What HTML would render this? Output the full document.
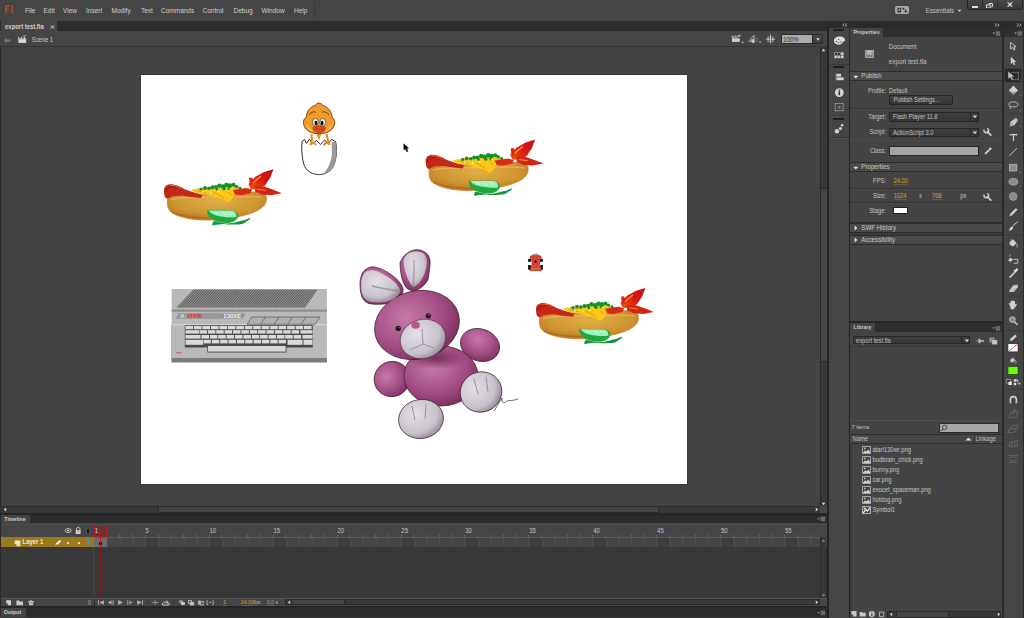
<!DOCTYPE html>
<html><head><meta charset="utf-8">
<style>
html,body{margin:0;padding:0;}
body{width:1024px;height:618px;overflow:hidden;position:relative;background:#2a2a2a;font-family:"Liberation Sans",sans-serif;color:#cfcfcf;}
.a{position:absolute;}
.t{position:absolute;white-space:nowrap;line-height:1;}
</style></head><body>
<!-- menu bar -->
<div class="a" style="left:0;top:0;width:1024px;height:21px;background:#454545"></div>
<svg class="a" style="left:4px;top:4px" width="11" height="11" viewBox="0 0 11 11"><path d="M1.8 1.9H5.6M1.8 1.9V9.6M1.8 5.6H5" stroke="#b04a32" stroke-width="1.7" fill="none"/><path d="M8.2 1.4V8.4Q8.2 9.4 9.4 9.8" stroke="#b04a32" stroke-width="1.5" fill="none"/></svg>
<div id="menu" style="font-size:6.5px;color:#cfcfcf">
<span class="t" style="left:25px;top:7.6px">File</span>
<span class="t" style="left:43.5px;top:7.6px">Edit</span>
<span class="t" style="left:63px;top:7.6px">View</span>
<span class="t" style="left:86px;top:7.6px">Insert</span>
<span class="t" style="left:111.5px;top:7.6px">Modify</span>
<span class="t" style="left:141px;top:7.6px">Text</span>
<span class="t" style="left:161px;top:7.6px">Commands</span>
<span class="t" style="left:202.5px;top:7.6px">Control</span>
<span class="t" style="left:233.5px;top:7.6px">Debug</span>
<span class="t" style="left:261.5px;top:7.6px">Window</span>
<span class="t" style="left:294px;top:7.6px">Help</span>
</div>
<div class="a" style="left:314px;top:3px;width:1px;height:14px;background:#3a3a3a"></div>
<!-- top right -->
<div class="a" style="left:895px;top:6px;width:14px;height:8px;background:#a9a9a9;border-radius:2px"></div>
<svg class="a" style="left:895px;top:6px" width="14" height="8" viewBox="0 0 14 8"><path d="M3 2.2h2.6v3.4H3z" fill="none" stroke="#333" stroke-width="1.1"/><path d="M4.3 5.6v1.3" stroke="#333" stroke-width="1"/><circle cx="8.5" cy="2.8" r="1" fill="#333"/><path d="M9.3 5.3h3M10.8 3.8v3" stroke="#333" stroke-width="1.1"/></svg>
<div class="a" style="left:919.5px;top:3px;width:0.8px;height:14px;background:#414141"></div>
<span class="t" style="left:925.5px;top:6.9px;font-size:6.3px;color:#c4c4c4;transform:scaleY(1.15);transform-origin:0 0">Essentials</span>
<svg class="a" style="left:957px;top:9px" width="5" height="4"><path d="M0.5 0.8h4L2.5 3z" fill="#ccc"/></svg>
<div class="a" style="left:967.3px;top:-2px;width:55.4px;height:11.6px;background:linear-gradient(#4a4a4a,#3a3a3a);border:1px solid #262626;border-radius:0 0 3px 3px;box-sizing:border-box"></div>
<div class="a" style="left:982px;top:0;width:1px;height:9px;background:#2b2b2b"></div>
<div class="a" style="left:997px;top:0;width:1px;height:9px;background:#2b2b2b"></div>
<div class="a" style="left:972px;top:5.8px;width:6px;height:2px;background:#e0e0e0"></div>
<svg class="a" style="left:986.3px;top:2.6px" width="7" height="5.5" viewBox="0 0 7 5.5"><path d="M2.8 0.6h3.6v3.2h-1" fill="none" stroke="#e6e6e6" stroke-width="1"/><path d="M0.6 1.8h3.6v3.2H0.6z" fill="none" stroke="#e6e6e6" stroke-width="1"/></svg>
<svg class="a" style="left:1006.6px;top:2.4px" width="6" height="5" viewBox="0 0 6 5"><path d="M0.6 0.4L5.2 4.6M5.2 0.4L0.6 4.6" stroke="#e8e8e8" stroke-width="1.2"/></svg>
<!-- doc tab bar -->
<div class="a" style="left:0;top:21px;width:827px;height:10px;background:#2c2c2c"></div>
<div class="a" style="left:1px;top:21px;width:56px;height:10px;background:#454545"></div>
<span class="t" style="left:5.1px;top:23.6px;font-size:5.9px;font-weight:bold;color:#d2d2d2;transform:scaleY(1.2);transform-origin:0 0">export test.fla</span>
<svg class="a" style="left:50px;top:24.5px" width="5" height="4" viewBox="0 0 5 4"><path d="M0.6 0.4L4.4 3.6M4.4 0.4L0.6 3.6" stroke="#cfcfcf" stroke-width="0.9"/></svg>
<!-- scene bar -->
<div class="a" style="left:0;top:31px;width:827px;height:14.5px;background:#454545"></div>
<div class="a" style="left:0;top:45.5px;width:827px;height:1.5px;background:#333"></div>
<svg class="a" style="left:3px;top:36.6px" width="8" height="7" viewBox="0 0 8 7"><path d="M0.8 3.5L3.6 0.8V2.5H7.2V4.5H3.6V6.2z" fill="#7a7a7a"/></svg>
<svg class="a" style="left:17px;top:35px" width="10" height="9" viewBox="0 0 10 9"><path d="M1.4 4.2h7.8v3.7H1.4z" fill="#d8d8d8"/><path d="M1 4.4L1.2 1.6L3 4.2L4.4 1.4L5.8 4.2L7.4 1.4L9.2 4.2V4.6H1z" fill="#cfcfcf"/><path d="M5.6 1.4L9 0.4" stroke="#cfcfcf" stroke-width="0.7"/></svg>
<span class="t" style="left:31.8px;top:37.4px;font-size:5.8px;color:#c8c8c8;transform:scaleY(1.2);transform-origin:0 0">Scene 1</span>
<!-- scene right icons -->
<svg class="a" style="left:731px;top:34px" width="13" height="10" viewBox="0 0 13 10"><path d="M1 4.3h7.8v3.6H1z" fill="#cfcfcf"/><path d="M1 4.3L1.6 1.8L2.8 3.8M3.8 4L4.6 1.6L5.8 3.6M6.6 3.6L7.4 1.2L8.6 3M8.6 2.6L9.2 0.6" stroke="#cdcdcd" stroke-width="0.9" fill="none"/><path d="M10.3 7.8h2.6L11.6 9.2z" fill="#d0d0d0"/></svg>
<svg class="a" style="left:748px;top:34px" width="14" height="10" viewBox="0 0 14 10"><path d="M1 7.2L6 1.2V7.2z" fill="none" stroke="#bdbdbd" stroke-width="0.9"/><circle cx="5.2" cy="7" r="1.9" fill="#c8c8c8"/><path d="M6.6 4.6h2.4v2.6H6.6z" fill="#222" stroke="#aaa" stroke-width="0.6"/><path d="M10.8 7.6h2.6L12.1 9z" fill="#d0d0d0"/></svg>
<svg class="a" style="left:765px;top:34px" width="11" height="10" viewBox="0 0 11 10"><path d="M1 5.2H10M5.5 0.6V9.4M3.2 2.8V7.6M7.8 2.8V7.6" stroke="#d0d0d0" stroke-width="0.9" fill="none"/><path d="M2.2 7.6H8.8M2.2 2.8H8.8" stroke="#d0d0d0" stroke-width="0.5" fill="none" opacity="0.6"/></svg>
<div class="a" style="left:781px;top:34.3px;width:41.7px;height:9.4px;background:#2a2a2a;border-radius:1.5px"></div>
<div class="a" style="left:781.8px;top:35.3px;width:30.2px;height:7.6px;background:#ababab"></div>
<div class="a" style="left:812.8px;top:35.3px;width:9.2px;height:7.6px;background:linear-gradient(#474747,#393939)"></div>
<svg class="a" style="left:815.5px;top:37.6px" width="4" height="3"><path d="M0.2 0.3h3.6L2 2.8z" fill="#e0e0e0"/></svg>
<span class="t" style="left:783.3px;top:36.1px;font-size:6px;color:#2a3038;transform:scaleY(1.1);transform-origin:0 0">100%</span>
<!-- pasteboard -->
<div class="a" style="left:1px;top:47px;width:819px;height:459px;background:#434343"></div>
<!-- stage -->
<div class="a" style="left:141px;top:75px;width:546px;height:409px;background:#fff;box-shadow:0 0 0 1px #3a3a3a"></div>
<!-- stage art -->
<svg class="a" style="left:0;top:0" width="1024" height="618" viewBox="0 0 1024 618">
<defs>
<radialGradient id="bunG" cx="0.5" cy="0.35" r="0.7"><stop offset="0" stop-color="#e0ae48"/><stop offset="0.6" stop-color="#d09632"/><stop offset="1" stop-color="#b2701c"/></radialGradient>
<linearGradient id="tomG" x1="0" y1="1" x2="1" y2="0"><stop offset="0" stop-color="#f06010"/><stop offset="0.5" stop-color="#d81a10"/><stop offset="1" stop-color="#c01010"/></linearGradient>
<g id="hotdog">
<path d="M9.5 37C8 31.5 13 31 24 32L70 32.5L96 30C105 29 110 32 108 40C105 50 84 55 62 57.5C40 59.5 18 56 11.5 48.5C9 45 9.5 41 9.5 37Z" fill="url(#bunG)" stroke="#c88a38" stroke-width="0.9"/>
<path d="M13 38C22 34 50 35.5 70 35.5C88 35 100 33 105 36" stroke="#ecc070" stroke-width="1.4" fill="none" opacity="0.6"/>
<path d="M14 50C24 55 44 57 62 55" stroke="#a8621a" stroke-width="1.6" fill="none" opacity="0.6"/>
<path d="M6 29.5C5.5 24 9.5 21.8 15 22.5C20 23.2 23 25 26 27L36 30.5L44.5 33L43 36L34 35.2L24 33.5L14 34.2C11 36.4 8 37.5 6.5 34Z" fill="#c42818"/>
<path d="M7.6 30C8.2 26 12 24.4 17 25" stroke="#7a1008" stroke-width="1.2" fill="none" opacity="0.6"/>
<path d="M12 23.5C16 23 20 24 23 26" stroke="#f07040" stroke-width="1" fill="none"/>
<path d="M33 28C40 26 50 25 60 24.5L79 24L84 27.5L80 31.5L76 33.5L73 38.5L69 40.5L65 37L56 35L48 32.5L38 31Z" fill="#fac814"/>
<path d="M40 29L48 31M55 30L62 33.5L66 36M70 30L74 33" stroke="#e8900e" stroke-width="0.9" fill="none"/>
<g fill="#14902a"><circle cx="43" cy="27" r="1.6"/><circle cx="47" cy="26" r="1.9"/><circle cx="51" cy="26.3" r="1.8"/><circle cx="54.5" cy="25.2" r="2"/><circle cx="58" cy="25" r="2"/><circle cx="61.5" cy="23.6" r="2.2"/><circle cx="65" cy="24.4" r="2.2"/><circle cx="68.5" cy="23" r="2.3"/><circle cx="72" cy="23.5" r="2.2"/><circle cx="75.5" cy="22.8" r="2"/><circle cx="78.5" cy="24.4" r="1.7"/><circle cx="82" cy="26" r="1.5"/><circle cx="66" cy="26.6" r="1.8"/><circle cx="71" cy="26.4" r="1.6"/><circle cx="59" cy="27.4" r="1.3"/></g>
<g fill="#c8f4e8"><circle cx="45" cy="30" r="0.9"/><circle cx="53" cy="30.5" r="0.8"/><circle cx="60" cy="29" r="0.9"/><circle cx="72" cy="27" r="0.8"/></g>
<path d="M75 28L88 26L94 27.5L93 31L84 33.2L77 32.5Z" fill="#d82a16"/>
<path d="M90.5 22L97 15L106 10L115.5 7.2L112 16L107 23.5L99 27.5L92.5 27Z" fill="url(#tomG)"/>
<path d="M91 16L94 15.5L96 20L92 24Z" fill="#e02414"/>
<path d="M97.5 24L106 24.5L116 28L123.8 31.2L113 33.2L104 32.5L97 29.5Z" fill="#d42414"/>
<path d="M95 21L103 14" stroke="#f89030" stroke-width="1.4" fill="none"/>
<path d="M99 27L108 28.5" stroke="#f88030" stroke-width="1.1" fill="none"/>
<path d="M49 48.3L75 48.4C78 49.5 80.5 51.5 80.5 54C79 58 76 60.5 70 61C63 61.2 57 59.5 53 56.5C50.5 54.5 49 51.5 49 48.3Z" fill="#1fa83e"/>
<path d="M56 59C60 60 64 61 68 61.5C74 61.5 80 60 84 58.5L86.5 58.3L88.5 57.2C90 57 91.2 56.4 92.4 55.8C92 57.6 90.6 58.6 88.8 59.2C86.5 61.5 83 62.6 79 62.4C75 62.8 70 62.6 66 62C62 62.2 58 62.8 54.3 63.4C54.2 61.6 54.8 60 56 59Z" fill="#15963a"/>
<path d="M50.8 48.6L75 48.7C77.5 50 78.6 52 78.2 55C72 55.8 64 55 57.5 53.2C54 52 51.5 50.5 50.8 48.6Z" fill="#9ef2bc"/>
<path d="M56 50L60 51.5M64 50.5L68 52.5M70 50L74 52" stroke="#d8fce8" stroke-width="0.8"/>

</g>
</defs>
<use href="#hotdog" transform="translate(158 162)"/>
<use href="#hotdog" transform="translate(419.7 132.4)"/>
<use href="#hotdog" transform="translate(530 280.7)"/>
<g transform="translate(522 248)">
<rect x="6.1" y="10.9" width="3" height="2.9" fill="#111"/><rect x="18" y="10.9" width="2.9" height="2.9" fill="#111"/>
<rect x="6.1" y="17" width="2.8" height="4.7" fill="#111"/><rect x="18.3" y="17" width="2.6" height="4.7" fill="#111"/>
<path d="M11.3 6.4h4.6v1.4h2.4l0.8 1v2.6h-1.6v6.4l1.4 1.2v1.2h0.4v2.6h-11.2v-2.6h0.4v-1.2l1.4-1.2v-6.4h-1.6v-2.6l0.8-1h2.4z" fill="#e04a34" stroke="#4a1208" stroke-width="0.5"/>
<path d="M12.2 8v12M15 8v12" stroke="#b82a1a" stroke-width="0.5"/>
<ellipse cx="13.6" cy="13.6" rx="1" ry="1.3" fill="#111"/>
<rect x="11.6" y="5.8" width="4" height="0.9" fill="#bbb"/>
<rect x="9" y="20.2" width="9" height="1.2" fill="#f07050"/>
</g>
<g transform="translate(165 282)">
<path d="M6.6 7h155.3v72.5H6.6z" fill="#b9b9b9"/>
<path d="M6.6 76h155.3v4.5H6.6z" fill="#7c7c7c"/>
<path d="M6.6 42h155.3v1.2H6.6z" fill="#d4d4d4"/>
<path d="M6.6 27.5h155.3v2.2H6.6z" fill="#8e8e8e"/>
<path d="M11.2 25.7L28.4 7.5H152.5L140 25.7z" fill="#a8a8a8"/>
<clipPath id="ventclip"><path d="M11.2 25.7L28.4 7.5H152.5L140 25.7z"/></clipPath>
<g clip-path="url(#ventclip)"><path d="M11.00 25.8L28.40 7.4" stroke="#5c5c5c" stroke-width="1.15"/><path d="M13.42 25.8L30.82 7.4" stroke="#5c5c5c" stroke-width="1.15"/><path d="M15.84 25.8L33.24 7.4" stroke="#5c5c5c" stroke-width="1.15"/><path d="M18.26 25.8L35.66 7.4" stroke="#5c5c5c" stroke-width="1.15"/><path d="M20.68 25.8L38.08 7.4" stroke="#5c5c5c" stroke-width="1.15"/><path d="M23.10 25.8L40.50 7.4" stroke="#5c5c5c" stroke-width="1.15"/><path d="M25.52 25.8L42.92 7.4" stroke="#5c5c5c" stroke-width="1.15"/><path d="M27.94 25.8L45.34 7.4" stroke="#5c5c5c" stroke-width="1.15"/><path d="M30.36 25.8L47.76 7.4" stroke="#5c5c5c" stroke-width="1.15"/><path d="M32.78 25.8L50.18 7.4" stroke="#5c5c5c" stroke-width="1.15"/><path d="M35.20 25.8L52.60 7.4" stroke="#5c5c5c" stroke-width="1.15"/><path d="M37.62 25.8L55.02 7.4" stroke="#5c5c5c" stroke-width="1.15"/><path d="M40.04 25.8L57.44 7.4" stroke="#5c5c5c" stroke-width="1.15"/><path d="M42.46 25.8L59.86 7.4" stroke="#5c5c5c" stroke-width="1.15"/><path d="M44.88 25.8L62.28 7.4" stroke="#5c5c5c" stroke-width="1.15"/><path d="M47.30 25.8L64.70 7.4" stroke="#5c5c5c" stroke-width="1.15"/><path d="M49.72 25.8L67.12 7.4" stroke="#5c5c5c" stroke-width="1.15"/><path d="M52.14 25.8L69.54 7.4" stroke="#5c5c5c" stroke-width="1.15"/><path d="M54.56 25.8L71.96 7.4" stroke="#5c5c5c" stroke-width="1.15"/><path d="M56.98 25.8L74.38 7.4" stroke="#5c5c5c" stroke-width="1.15"/><path d="M59.40 25.8L76.80 7.4" stroke="#5c5c5c" stroke-width="1.15"/><path d="M61.82 25.8L79.22 7.4" stroke="#5c5c5c" stroke-width="1.15"/><path d="M64.24 25.8L81.64 7.4" stroke="#5c5c5c" stroke-width="1.15"/><path d="M66.66 25.8L84.06 7.4" stroke="#5c5c5c" stroke-width="1.15"/><path d="M69.08 25.8L86.48 7.4" stroke="#5c5c5c" stroke-width="1.15"/><path d="M71.50 25.8L88.90 7.4" stroke="#5c5c5c" stroke-width="1.15"/><path d="M73.92 25.8L91.32 7.4" stroke="#5c5c5c" stroke-width="1.15"/><path d="M76.34 25.8L93.74 7.4" stroke="#5c5c5c" stroke-width="1.15"/><path d="M78.76 25.8L96.16 7.4" stroke="#5c5c5c" stroke-width="1.15"/><path d="M81.18 25.8L98.58 7.4" stroke="#5c5c5c" stroke-width="1.15"/><path d="M83.60 25.8L101.00 7.4" stroke="#5c5c5c" stroke-width="1.15"/><path d="M86.02 25.8L103.42 7.4" stroke="#5c5c5c" stroke-width="1.15"/><path d="M88.44 25.8L105.84 7.4" stroke="#5c5c5c" stroke-width="1.15"/><path d="M90.86 25.8L108.26 7.4" stroke="#5c5c5c" stroke-width="1.15"/><path d="M93.28 25.8L110.68 7.4" stroke="#5c5c5c" stroke-width="1.15"/><path d="M95.70 25.8L113.10 7.4" stroke="#5c5c5c" stroke-width="1.15"/><path d="M98.12 25.8L115.52 7.4" stroke="#5c5c5c" stroke-width="1.15"/><path d="M100.54 25.8L117.94 7.4" stroke="#5c5c5c" stroke-width="1.15"/><path d="M102.96 25.8L120.36 7.4" stroke="#5c5c5c" stroke-width="1.15"/><path d="M105.38 25.8L122.78 7.4" stroke="#5c5c5c" stroke-width="1.15"/><path d="M107.80 25.8L125.20 7.4" stroke="#5c5c5c" stroke-width="1.15"/><path d="M110.22 25.8L127.62 7.4" stroke="#5c5c5c" stroke-width="1.15"/><path d="M112.64 25.8L130.04 7.4" stroke="#5c5c5c" stroke-width="1.15"/><path d="M115.06 25.8L132.46 7.4" stroke="#5c5c5c" stroke-width="1.15"/><path d="M117.48 25.8L134.88 7.4" stroke="#5c5c5c" stroke-width="1.15"/><path d="M119.90 25.8L137.30 7.4" stroke="#5c5c5c" stroke-width="1.15"/><path d="M122.32 25.8L139.72 7.4" stroke="#5c5c5c" stroke-width="1.15"/><path d="M124.74 25.8L142.14 7.4" stroke="#5c5c5c" stroke-width="1.15"/><path d="M127.16 25.8L144.56 7.4" stroke="#5c5c5c" stroke-width="1.15"/><path d="M129.58 25.8L146.98 7.4" stroke="#5c5c5c" stroke-width="1.15"/><path d="M132.00 25.8L149.40 7.4" stroke="#5c5c5c" stroke-width="1.15"/><path d="M134.42 25.8L151.82 7.4" stroke="#5c5c5c" stroke-width="1.15"/><path d="M136.84 25.8L154.24 7.4" stroke="#5c5c5c" stroke-width="1.15"/><path d="M139.26 25.8L156.66 7.4" stroke="#5c5c5c" stroke-width="1.15"/><path d="M141.68 25.8L159.08 7.4" stroke="#5c5c5c" stroke-width="1.15"/><path d="M144.10 25.8L161.50 7.4" stroke="#5c5c5c" stroke-width="1.15"/><path d="M146.52 25.8L163.92 7.4" stroke="#5c5c5c" stroke-width="1.15"/><path d="M148.94 25.8L166.34 7.4" stroke="#5c5c5c" stroke-width="1.15"/><path d="M151.36 25.8L168.76 7.4" stroke="#5c5c5c" stroke-width="1.15"/></g>
<path d="M10.8 36.5L13.5 31.5H80.5L77.5 36.5z" fill="#8e8e8e"/>
<path d="M13.5 31.5H58L56 36.5H10.8z" fill="#9a9a9a"/>
<text x="22" y="36.1" font-family="Liberation Sans" font-weight="bold" font-size="5.2" fill="#e82020" textLength="15" lengthAdjust="spacingAndGlyphs">ATARI</text>
<text x="58.3" y="36.1" font-family="Liberation Sans" font-weight="bold" font-size="5.2" fill="#f4f4f4" textLength="18" lengthAdjust="spacingAndGlyphs">130XE</text>
<path d="M15.6 36L17 32.2M17.4 36V32.2M19.2 36L17.8 32.2" stroke="#e8e8e8" stroke-width="0.6"/>
<path d="M82 42.3L87 35H155L150 42.3z" fill="#b0b0b0" stroke="#444" stroke-width="0.6"/>
<path d="M95.5 42.3L100.5 35M109 42.3L114 35M122.5 42.3L127.5 35M136 42.3L141 35" stroke="#444" stroke-width="0.6"/>
<path d="M19.8 43.2H147.8V65.5H121.5V70.5H42.3V65.5H19.8z" fill="#4a4a4a"/>
<rect x="20.5" y="44.0" width="7.6" height="3.2" fill="#dadada"/><rect x="29.0" y="44.0" width="7.6" height="3.2" fill="#dadada"/><rect x="37.4" y="44.0" width="7.6" height="3.2" fill="#dadada"/><rect x="45.9" y="44.0" width="7.6" height="3.2" fill="#dadada"/><rect x="54.4" y="44.0" width="7.6" height="3.2" fill="#dadada"/><rect x="62.8" y="44.0" width="7.6" height="3.2" fill="#dadada"/><rect x="71.3" y="44.0" width="7.6" height="3.2" fill="#dadada"/><rect x="79.8" y="44.0" width="7.6" height="3.2" fill="#dadada"/><rect x="88.2" y="44.0" width="7.6" height="3.2" fill="#dadada"/><rect x="96.7" y="44.0" width="7.6" height="3.2" fill="#dadada"/><rect x="105.2" y="44.0" width="7.6" height="3.2" fill="#dadada"/><rect x="113.6" y="44.0" width="7.6" height="3.2" fill="#dadada"/><rect x="122.1" y="44.0" width="7.6" height="3.2" fill="#dadada"/><rect x="130.6" y="44.0" width="7.6" height="3.2" fill="#dadada"/><rect x="139.0" y="44.0" width="7.6" height="3.2" fill="#dadada"/><rect x="20.5" y="48.2" width="13.5" height="3.4" fill="#dadada"/><rect x="34.5" y="48.2" width="7.5" height="3.4" fill="#dadada"/><rect x="42.9" y="48.2" width="7.5" height="3.4" fill="#dadada"/><rect x="51.2" y="48.2" width="7.5" height="3.4" fill="#dadada"/><rect x="59.6" y="48.2" width="7.5" height="3.4" fill="#dadada"/><rect x="68.0" y="48.2" width="7.5" height="3.4" fill="#dadada"/><rect x="76.4" y="48.2" width="7.5" height="3.4" fill="#dadada"/><rect x="84.8" y="48.2" width="7.5" height="3.4" fill="#dadada"/><rect x="93.1" y="48.2" width="7.5" height="3.4" fill="#dadada"/><rect x="101.5" y="48.2" width="7.5" height="3.4" fill="#dadada"/><rect x="109.9" y="48.2" width="7.5" height="3.4" fill="#dadada"/><rect x="118.2" y="48.2" width="7.5" height="3.4" fill="#dadada"/><rect x="126.6" y="48.2" width="7.5" height="3.4" fill="#dadada"/><rect x="135.5" y="48.2" width="12.0" height="3.4" fill="#dadada"/><rect x="20.5" y="53.0" width="15.0" height="3.6" fill="#dadada"/><rect x="36.5" y="53.0" width="7.5" height="3.6" fill="#dadada"/><rect x="44.9" y="53.0" width="7.5" height="3.6" fill="#dadada"/><rect x="53.2" y="53.0" width="7.5" height="3.6" fill="#dadada"/><rect x="61.6" y="53.0" width="7.5" height="3.6" fill="#dadada"/><rect x="70.0" y="53.0" width="7.5" height="3.6" fill="#dadada"/><rect x="78.4" y="53.0" width="7.5" height="3.6" fill="#dadada"/><rect x="86.8" y="53.0" width="7.5" height="3.6" fill="#dadada"/><rect x="95.1" y="53.0" width="7.5" height="3.6" fill="#dadada"/><rect x="103.5" y="53.0" width="7.5" height="3.6" fill="#dadada"/><rect x="111.9" y="53.0" width="7.5" height="3.6" fill="#dadada"/><rect x="120.2" y="53.0" width="7.5" height="3.6" fill="#dadada"/><rect x="128.6" y="53.0" width="7.5" height="3.6" fill="#dadada"/><rect x="137.5" y="53.0" width="10.0" height="3.6" fill="#dadada"/><rect x="20.5" y="57.8" width="17.5" height="5.0" fill="#dadada"/><rect x="38.5" y="57.8" width="7.4" height="3.6" fill="#dadada"/><rect x="46.9" y="57.8" width="7.4" height="3.6" fill="#dadada"/><rect x="55.2" y="57.8" width="7.4" height="3.6" fill="#dadada"/><rect x="63.5" y="57.8" width="7.4" height="3.6" fill="#dadada"/><rect x="71.9" y="57.8" width="7.4" height="3.6" fill="#dadada"/><rect x="80.2" y="57.8" width="7.4" height="3.6" fill="#dadada"/><rect x="88.6" y="57.8" width="7.4" height="3.6" fill="#dadada"/><rect x="96.9" y="57.8" width="7.4" height="3.6" fill="#dadada"/><rect x="105.3" y="57.8" width="7.4" height="3.6" fill="#dadada"/><rect x="113.6" y="57.8" width="7.4" height="3.6" fill="#dadada"/><rect x="122.5" y="57.8" width="15.0" height="5.0" fill="#dadada"/><rect x="138.5" y="57.8" width="9.0" height="5.0" fill="#dadada"/>
<rect x="43" y="64" width="77.6" height="5.6" fill="#d8d8d8"/>
<path d="M11.3 70.8h5.2" stroke="#e04040" stroke-width="0.9"/>
<path d="M6.6 42.3V79" stroke="#9a9a9a" stroke-width="0.6"/>
</g>
<g transform="translate(350 244)">
<defs>
<radialGradient id="pinkG" cx="0.4" cy="0.35" r="0.7"><stop offset="0" stop-color="#c47aa6"/><stop offset="0.55" stop-color="#a85288"/><stop offset="1" stop-color="#7a2e5a"/></radialGradient>
<radialGradient id="shadG"><stop offset="0" stop-color="#6a2048" stop-opacity="0.85"/><stop offset="1" stop-color="#6a2048" stop-opacity="0"/></radialGradient>
<radialGradient id="grayG" cx="0.4" cy="0.35" r="0.7"><stop offset="0" stop-color="#e4e0e6"/><stop offset="0.7" stop-color="#c8c2cc"/><stop offset="1" stop-color="#8c8490"/></radialGradient>
</defs>
<g stroke="#3a1a2a" stroke-width="0.7">
<path d="M10.1 37.5C11 31 13 27 15.2 25.8C18 23.5 21 22.6 24 22.9C30 24 35 26.5 38.5 28.8C44 32.5 48 36 50.1 39C52.5 42 53.6 45 53 47.7C52 51 50.5 53.5 48.7 55C44 58 39 59.5 34.1 60C28 60.5 22 60.5 18.1 59.3C15 58 12.8 55.5 11.6 52C10.2 47.5 9.8 42 10.1 37.5Z" fill="url(#pinkG)"/>
<path d="M50.1 18.6C52 14 54.5 11 57.4 9.1C61 6.5 64 5.6 67.6 5.7C72 6 75.5 8 77.8 10.6C79.6 13 80.4 16.5 80 20C79.6 26 79 31 77.8 36C75 41 71 44.5 66.2 46.2C63 47.2 60 46.5 57.4 44.8C54.5 42 52.8 38 51.6 33.1C50.6 28 49.9 23 50.1 18.6Z" fill="url(#pinkG)"/>
<ellipse cx="42" cy="135" rx="18" ry="17.5" fill="url(#pinkG)" transform="rotate(-30 42 135)"/>
<ellipse cx="130" cy="101" rx="20" ry="16" fill="url(#pinkG)" transform="rotate(20 130 101)"/>
<ellipse cx="91" cy="132" rx="37" ry="30" fill="url(#pinkG)"/>
<ellipse cx="86" cy="114" rx="30" ry="11" fill="url(#shadG)" stroke="none"/><ellipse cx="67" cy="81" rx="43" ry="34" fill="url(#pinkG)" transform="rotate(-15 67 81)"/>
</g>
<path d="M11.2 38C12 32 14 28.5 17 27C20.5 25.6 24 26 28 27.5C34 30 40 34 45 38.5C48.5 42 50.5 45.5 50 48C48.5 52 44 55.5 38 57.5C31 59 24 58.8 19 57.6C15 56 13 53 12 49.5C11.2 46 11 42 11.2 38Z" fill="url(#grayG)"/><path d="M22 42C30 44 40 46 49 47" stroke="#8a8088" stroke-width="1.3" fill="none" opacity="0.7"/>
<path d="M53.6 16C55 12 57.5 9.5 61 8.2C65 7 69.5 7 73 9C76 11 77.2 14.5 77 18.5C76.5 25 74.5 31 71 36.5C68.5 40.5 65.5 42.5 63 43C60.5 40.5 58 36 56 30C54.4 25 53.3 20 53.6 16Z" fill="url(#grayG)"/><path d="M64 16C64.5 26 64 34 63 42" stroke="#8a8088" stroke-width="1.2" fill="none" opacity="0.7"/>
<ellipse cx="73" cy="95" rx="23" ry="19.5" fill="url(#grayG)" stroke="#3a1a2a" stroke-width="0.5" transform="rotate(-15 73 95)"/>
<path d="M72 85L73 100M60 106L73 100L84 104" stroke="#8a8090" stroke-width="0.8" fill="none"/>
<ellipse cx="65.6" cy="81.2" rx="4.2" ry="3.6" fill="#b45a84"/>
<circle cx="48.2" cy="84.4" r="2.6" fill="#1a1a1a"/><circle cx="48.8" cy="83.6" r="0.7" fill="#888"/>
<circle cx="78.3" cy="71.8" r="2.6" fill="#1a1a1a"/><circle cx="78.9" cy="71" r="0.7" fill="#888"/>
<ellipse cx="71" cy="175" rx="22.5" ry="19.5" fill="url(#grayG)" stroke="#3a1a2a" stroke-width="0.7" transform="rotate(-10 71 175)"/>
<ellipse cx="131" cy="148" rx="21" ry="20" fill="url(#grayG)" stroke="#3a1a2a" stroke-width="0.7" transform="rotate(-25 131 148)"/>
<path d="M62 162L65 176M76 160L75 175M124 135L128 150M136 133L138 148" stroke="#9a90a0" stroke-width="1" fill="none"/>
<path d="M144 167C147 162 150 157 152 154C151 159 154 160 157 157C160 156 163 157 168 155" stroke="#333" stroke-width="0.7" fill="none"/>
</g>
<g transform="translate(295 98)">
<path d="M7 43.5L9.5 41.5L11.5 45.5L14.5 41L17.5 45.5L21.5 42.5L25.5 46.5L29.5 42L33.5 45L36.5 41.5L40.5 43.5C42.5 52 41.5 62 37.5 70C33.5 75 28 77 22.5 76.5C15.5 76 9.5 72 8 63C6.8 56 6.5 50 7 43.5Z" fill="#fff" stroke="#1a1a1a" stroke-width="0.9"/>
<path d="M36.5 44.5L40.5 43.5C42.5 52 42 62 38 70C34.5 74 30.5 76 27.5 76.5C32.5 72 36.5 64 37 55Z" fill="#9a9a9a"/>
<path d="M16.5 36L17 42L15.5 46.5L19 44.5L21 47M31.5 36L33 42L34.5 46L31 44.5L28.5 47.5" stroke="#e0901e" stroke-width="2" fill="none" stroke-linejoin="round"/>
<path d="M21.5 35.5L24 43L26.5 35.5Z" fill="#e8951f"/>
<path d="M24 5C26 5.5 27 6 28 7.5C33 9 36.5 13 37.2 19.5C39.8 21 40.6 25 38.8 28.4C37 32.6 31.5 35.8 24 35.8C16.5 35.8 11 32.6 9.4 28.4C7.6 25 8.4 21 11 19.5C11.8 13 15 9 20 7.5C21.5 6 22.5 5.2 24 5Z" fill="#f29b2d" stroke="#7a3a0c" stroke-width="0.9"/>
<path d="M12 27C13 30 15 32 17 33M36 27C35 30 33 32 31 33" stroke="#f8c070" stroke-width="1.4" fill="none" opacity="0.8"/>
<ellipse cx="20.4" cy="24.2" rx="2.8" ry="3.8" fill="#fff" stroke="#222" stroke-width="0.6"/>
<ellipse cx="27.8" cy="24.2" rx="2.8" ry="3.8" fill="#fff" stroke="#222" stroke-width="0.6"/>
<ellipse cx="21" cy="25" rx="1.4" ry="2.2" fill="#111"/>
<ellipse cx="27.2" cy="25" rx="1.4" ry="2.2" fill="#111"/>
<path d="M18.2 29.2C20.5 27.8 27.5 27.8 30 29.2C31 31.8 28.5 34.6 24.2 34.6C20 34.6 17.4 31.8 18.2 29.2Z" fill="#e4481e" stroke="#7a2a10" stroke-width="0.6"/>
<path d="M19 31.3H29.2" stroke="#a83010" stroke-width="0.5"/>
<path d="M14 17C15.5 14.2 18.5 13.2 21 14.2M27 14.2C29.5 13.2 32.5 14.2 34 17" stroke="#6a3008" stroke-width="0.8" fill="none"/>
</g>

<path d="M403.8 143.8V149.8L405.3 148.6L406.6 151.6L407.9 151.2L406.7 148.3H408.5Z" fill="#000" stroke="#000" stroke-width="0.5" stroke-linejoin="round"/>
</svg>
<!-- v scroll -->
<div class="a" style="left:820px;top:46px;width:7px;height:460px;background:#383838;border-left:0.7px solid #2a2a2a;box-sizing:border-box"></div>
<svg class="a" style="left:821px;top:48px" width="5" height="4"><path d="M0.6 3.2h3.8L2.5 0.8z" fill="#d6d6d6"/></svg>
<div class="a" style="left:820.7px;top:187.8px;width:6.3px;height:174.5px;background:#474747;border-top:1px solid #2a2a2a;border-bottom:1px solid #2a2a2a;box-sizing:border-box"></div>
<svg class="a" style="left:821px;top:502px" width="5" height="4"><path d="M0.6 0.8h3.8L2.5 3.2z" fill="#d6d6d6"/></svg>
<!-- h scroll -->
<div class="a" style="left:1px;top:506px;width:819px;height:6.5px;background:#383838;border-top:1px solid #2a2a2a;box-sizing:border-box"></div>
<svg class="a" style="left:3px;top:507px" width="4" height="5"><path d="M3.2 0.6v3.8L0.8 2.5z" fill="#d6d6d6"/></svg>
<div class="a" style="left:158px;top:506px;width:501px;height:6.5px;background:#454545;border:1px solid #2a2a2a;box-sizing:border-box"></div>
<svg class="a" style="left:815px;top:507px" width="4" height="5"><path d="M0.8 0.6v3.8L3.2 2.5z" fill="#d6d6d6"/></svg>
<div class="a" style="left:820px;top:506px;width:7px;height:6.5px;background:#474747"></div>
<div class="a" style="left:0;top:512.5px;width:827px;height:3px;background:#262626"></div>
<!-- timeline tab bar -->
<div class="a" style="left:0;top:515.5px;width:827px;height:8px;background:#2c2c2c"></div>
<div class="a" style="left:1px;top:514.7px;width:29px;height:8.6px;background:#444"></div>
<span class="t" style="left:4.3px;top:517.1px;font-size:5.3px;font-weight:bold;color:#c8cdd2">Timeline</span>
<svg class="a" style="left:817px;top:516px" width="9" height="6"><path d="M0.5 2.2h2.4L1.7 3.6z" fill="#bbb"/><rect x="3.6" y="0.6" width="4.6" height="4.6" fill="#6a6a6a"/></svg>
<!-- timeline header -->
<div class="a" style="left:1px;top:523.3px;width:826px;height:14px;background:#454545"></div>
<div class="a" style="left:1px;top:523.5px;width:826px;height:1.2px;background:#4e4e4e"></div>
<span class="t" style="left:145.60px;top:528.3px;font-size:5.9px;color:#c4c4c4;transform:scaleY(1.17);transform-origin:0 0">5</span><span class="t" style="left:209.54px;top:528.3px;font-size:5.9px;color:#c4c4c4;transform:scaleY(1.17);transform-origin:0 0">10</span><span class="t" style="left:273.48px;top:528.3px;font-size:5.9px;color:#c4c4c4;transform:scaleY(1.17);transform-origin:0 0">15</span><span class="t" style="left:337.42px;top:528.3px;font-size:5.9px;color:#c4c4c4;transform:scaleY(1.17);transform-origin:0 0">20</span><span class="t" style="left:401.36px;top:528.3px;font-size:5.9px;color:#c4c4c4;transform:scaleY(1.17);transform-origin:0 0">25</span><span class="t" style="left:465.30px;top:528.3px;font-size:5.9px;color:#c4c4c4;transform:scaleY(1.17);transform-origin:0 0">30</span><span class="t" style="left:529.24px;top:528.3px;font-size:5.9px;color:#c4c4c4;transform:scaleY(1.17);transform-origin:0 0">35</span><span class="t" style="left:593.18px;top:528.3px;font-size:5.9px;color:#c4c4c4;transform:scaleY(1.17);transform-origin:0 0">40</span><span class="t" style="left:657.12px;top:528.3px;font-size:5.9px;color:#c4c4c4;transform:scaleY(1.17);transform-origin:0 0">45</span><span class="t" style="left:721.06px;top:528.3px;font-size:5.9px;color:#c4c4c4;transform:scaleY(1.17);transform-origin:0 0">50</span><span class="t" style="left:785.00px;top:528.3px;font-size:5.9px;color:#c4c4c4;transform:scaleY(1.17);transform-origin:0 0">55</span><div class="a" style="left:106.39px;top:535.2px;width:0.8px;height:1.6px;background:#6e6e6e"></div><div class="a" style="left:119.18px;top:535.2px;width:0.8px;height:1.6px;background:#6e6e6e"></div><div class="a" style="left:131.96px;top:535.2px;width:0.8px;height:1.6px;background:#6e6e6e"></div><div class="a" style="left:144.75px;top:535.2px;width:0.8px;height:1.6px;background:#6e6e6e"></div><div class="a" style="left:157.54px;top:535.2px;width:0.8px;height:1.6px;background:#6e6e6e"></div><div class="a" style="left:170.33px;top:535.2px;width:0.8px;height:1.6px;background:#6e6e6e"></div><div class="a" style="left:183.12px;top:535.2px;width:0.8px;height:1.6px;background:#6e6e6e"></div><div class="a" style="left:195.90px;top:535.2px;width:0.8px;height:1.6px;background:#6e6e6e"></div><div class="a" style="left:208.69px;top:535.2px;width:0.8px;height:1.6px;background:#6e6e6e"></div><div class="a" style="left:221.48px;top:535.2px;width:0.8px;height:1.6px;background:#6e6e6e"></div><div class="a" style="left:234.27px;top:535.2px;width:0.8px;height:1.6px;background:#6e6e6e"></div><div class="a" style="left:247.06px;top:535.2px;width:0.8px;height:1.6px;background:#6e6e6e"></div><div class="a" style="left:259.84px;top:535.2px;width:0.8px;height:1.6px;background:#6e6e6e"></div><div class="a" style="left:272.63px;top:535.2px;width:0.8px;height:1.6px;background:#6e6e6e"></div><div class="a" style="left:285.42px;top:535.2px;width:0.8px;height:1.6px;background:#6e6e6e"></div><div class="a" style="left:298.21px;top:535.2px;width:0.8px;height:1.6px;background:#6e6e6e"></div><div class="a" style="left:311.00px;top:535.2px;width:0.8px;height:1.6px;background:#6e6e6e"></div><div class="a" style="left:323.78px;top:535.2px;width:0.8px;height:1.6px;background:#6e6e6e"></div><div class="a" style="left:336.57px;top:535.2px;width:0.8px;height:1.6px;background:#6e6e6e"></div><div class="a" style="left:349.36px;top:535.2px;width:0.8px;height:1.6px;background:#6e6e6e"></div><div class="a" style="left:362.15px;top:535.2px;width:0.8px;height:1.6px;background:#6e6e6e"></div><div class="a" style="left:374.94px;top:535.2px;width:0.8px;height:1.6px;background:#6e6e6e"></div><div class="a" style="left:387.72px;top:535.2px;width:0.8px;height:1.6px;background:#6e6e6e"></div><div class="a" style="left:400.51px;top:535.2px;width:0.8px;height:1.6px;background:#6e6e6e"></div><div class="a" style="left:413.30px;top:535.2px;width:0.8px;height:1.6px;background:#6e6e6e"></div><div class="a" style="left:426.09px;top:535.2px;width:0.8px;height:1.6px;background:#6e6e6e"></div><div class="a" style="left:438.88px;top:535.2px;width:0.8px;height:1.6px;background:#6e6e6e"></div><div class="a" style="left:451.66px;top:535.2px;width:0.8px;height:1.6px;background:#6e6e6e"></div><div class="a" style="left:464.45px;top:535.2px;width:0.8px;height:1.6px;background:#6e6e6e"></div><div class="a" style="left:477.24px;top:535.2px;width:0.8px;height:1.6px;background:#6e6e6e"></div><div class="a" style="left:490.03px;top:535.2px;width:0.8px;height:1.6px;background:#6e6e6e"></div><div class="a" style="left:502.82px;top:535.2px;width:0.8px;height:1.6px;background:#6e6e6e"></div><div class="a" style="left:515.60px;top:535.2px;width:0.8px;height:1.6px;background:#6e6e6e"></div><div class="a" style="left:528.39px;top:535.2px;width:0.8px;height:1.6px;background:#6e6e6e"></div><div class="a" style="left:541.18px;top:535.2px;width:0.8px;height:1.6px;background:#6e6e6e"></div><div class="a" style="left:553.97px;top:535.2px;width:0.8px;height:1.6px;background:#6e6e6e"></div><div class="a" style="left:566.76px;top:535.2px;width:0.8px;height:1.6px;background:#6e6e6e"></div><div class="a" style="left:579.54px;top:535.2px;width:0.8px;height:1.6px;background:#6e6e6e"></div><div class="a" style="left:592.33px;top:535.2px;width:0.8px;height:1.6px;background:#6e6e6e"></div><div class="a" style="left:605.12px;top:535.2px;width:0.8px;height:1.6px;background:#6e6e6e"></div><div class="a" style="left:617.91px;top:535.2px;width:0.8px;height:1.6px;background:#6e6e6e"></div><div class="a" style="left:630.70px;top:535.2px;width:0.8px;height:1.6px;background:#6e6e6e"></div><div class="a" style="left:643.48px;top:535.2px;width:0.8px;height:1.6px;background:#6e6e6e"></div><div class="a" style="left:656.27px;top:535.2px;width:0.8px;height:1.6px;background:#6e6e6e"></div><div class="a" style="left:669.06px;top:535.2px;width:0.8px;height:1.6px;background:#6e6e6e"></div><div class="a" style="left:681.85px;top:535.2px;width:0.8px;height:1.6px;background:#6e6e6e"></div><div class="a" style="left:694.64px;top:535.2px;width:0.8px;height:1.6px;background:#6e6e6e"></div><div class="a" style="left:707.42px;top:535.2px;width:0.8px;height:1.6px;background:#6e6e6e"></div><div class="a" style="left:720.21px;top:535.2px;width:0.8px;height:1.6px;background:#6e6e6e"></div><div class="a" style="left:733.00px;top:535.2px;width:0.8px;height:1.6px;background:#6e6e6e"></div><div class="a" style="left:745.79px;top:535.2px;width:0.8px;height:1.6px;background:#6e6e6e"></div><div class="a" style="left:758.58px;top:535.2px;width:0.8px;height:1.6px;background:#6e6e6e"></div><div class="a" style="left:771.36px;top:535.2px;width:0.8px;height:1.6px;background:#6e6e6e"></div><div class="a" style="left:784.15px;top:535.2px;width:0.8px;height:1.6px;background:#6e6e6e"></div><div class="a" style="left:796.94px;top:535.2px;width:0.8px;height:1.6px;background:#6e6e6e"></div><div class="a" style="left:809.73px;top:535.2px;width:0.8px;height:1.6px;background:#6e6e6e"></div>
<svg class="a" style="left:64px;top:527px" width="28" height="8" viewBox="0 0 28 8"><ellipse cx="4.2" cy="3.6" rx="3" ry="2" fill="none" stroke="#c8c8c8" stroke-width="0.9"/><circle cx="4.2" cy="3.6" r="1.1" fill="#c8c8c8"/>
<path d="M12.4 3.2V1.8C12.4 0 16 0 16 1.8V3.2" fill="none" stroke="#d0d0d0" stroke-width="0.9"/><rect x="11.8" y="3.2" width="4.8" height="3.8" fill="#d8d8d8"/><rect x="13.8" y="4.3" width="0.8" height="1.5" fill="#555"/>
<rect x="22.6" y="1.2" width="2.6" height="5.4" fill="#181818" stroke="#7a7a7a" stroke-width="0.4"/></svg>
<!-- layer row -->
<div class="a" style="left:1px;top:537.2px;width:826px;height:10px;background:#464646"></div>
<div class="a" style="left:94px;top:537.2px;width:726px;height:0.8px;background:#5c5c5c"></div>
<div class="a" style="left:145.95px;top:538px;width:12px;height:9px;background:#3e3e3e"></div><div class="a" style="left:209.89px;top:538px;width:12px;height:9px;background:#3e3e3e"></div><div class="a" style="left:273.83px;top:538px;width:12px;height:9px;background:#3e3e3e"></div><div class="a" style="left:337.77px;top:538px;width:12px;height:9px;background:#3e3e3e"></div><div class="a" style="left:401.71px;top:538px;width:12px;height:9px;background:#3e3e3e"></div><div class="a" style="left:465.65px;top:538px;width:12px;height:9px;background:#3e3e3e"></div><div class="a" style="left:529.59px;top:538px;width:12px;height:9px;background:#3e3e3e"></div><div class="a" style="left:593.53px;top:538px;width:12px;height:9px;background:#3e3e3e"></div><div class="a" style="left:657.47px;top:538px;width:12px;height:9px;background:#3e3e3e"></div><div class="a" style="left:721.41px;top:538px;width:12px;height:9px;background:#3e3e3e"></div><div class="a" style="left:785.35px;top:538px;width:12px;height:9px;background:#3e3e3e"></div><div class="a" style="left:106.99px;top:538px;width:0.8px;height:9px;background:#4e4e4e"></div><div class="a" style="left:119.78px;top:538px;width:0.8px;height:9px;background:#4e4e4e"></div><div class="a" style="left:132.56px;top:538px;width:0.8px;height:9px;background:#4e4e4e"></div><div class="a" style="left:145.35px;top:538px;width:0.8px;height:9px;background:#4e4e4e"></div><div class="a" style="left:158.14px;top:538px;width:0.8px;height:9px;background:#4e4e4e"></div><div class="a" style="left:170.93px;top:538px;width:0.8px;height:9px;background:#4e4e4e"></div><div class="a" style="left:183.72px;top:538px;width:0.8px;height:9px;background:#4e4e4e"></div><div class="a" style="left:196.50px;top:538px;width:0.8px;height:9px;background:#4e4e4e"></div><div class="a" style="left:209.29px;top:538px;width:0.8px;height:9px;background:#4e4e4e"></div><div class="a" style="left:222.08px;top:538px;width:0.8px;height:9px;background:#4e4e4e"></div><div class="a" style="left:234.87px;top:538px;width:0.8px;height:9px;background:#4e4e4e"></div><div class="a" style="left:247.66px;top:538px;width:0.8px;height:9px;background:#4e4e4e"></div><div class="a" style="left:260.44px;top:538px;width:0.8px;height:9px;background:#4e4e4e"></div><div class="a" style="left:273.23px;top:538px;width:0.8px;height:9px;background:#4e4e4e"></div><div class="a" style="left:286.02px;top:538px;width:0.8px;height:9px;background:#4e4e4e"></div><div class="a" style="left:298.81px;top:538px;width:0.8px;height:9px;background:#4e4e4e"></div><div class="a" style="left:311.60px;top:538px;width:0.8px;height:9px;background:#4e4e4e"></div><div class="a" style="left:324.38px;top:538px;width:0.8px;height:9px;background:#4e4e4e"></div><div class="a" style="left:337.17px;top:538px;width:0.8px;height:9px;background:#4e4e4e"></div><div class="a" style="left:349.96px;top:538px;width:0.8px;height:9px;background:#4e4e4e"></div><div class="a" style="left:362.75px;top:538px;width:0.8px;height:9px;background:#4e4e4e"></div><div class="a" style="left:375.54px;top:538px;width:0.8px;height:9px;background:#4e4e4e"></div><div class="a" style="left:388.32px;top:538px;width:0.8px;height:9px;background:#4e4e4e"></div><div class="a" style="left:401.11px;top:538px;width:0.8px;height:9px;background:#4e4e4e"></div><div class="a" style="left:413.90px;top:538px;width:0.8px;height:9px;background:#4e4e4e"></div><div class="a" style="left:426.69px;top:538px;width:0.8px;height:9px;background:#4e4e4e"></div><div class="a" style="left:439.48px;top:538px;width:0.8px;height:9px;background:#4e4e4e"></div><div class="a" style="left:452.26px;top:538px;width:0.8px;height:9px;background:#4e4e4e"></div><div class="a" style="left:465.05px;top:538px;width:0.8px;height:9px;background:#4e4e4e"></div><div class="a" style="left:477.84px;top:538px;width:0.8px;height:9px;background:#4e4e4e"></div><div class="a" style="left:490.63px;top:538px;width:0.8px;height:9px;background:#4e4e4e"></div><div class="a" style="left:503.42px;top:538px;width:0.8px;height:9px;background:#4e4e4e"></div><div class="a" style="left:516.20px;top:538px;width:0.8px;height:9px;background:#4e4e4e"></div><div class="a" style="left:528.99px;top:538px;width:0.8px;height:9px;background:#4e4e4e"></div><div class="a" style="left:541.78px;top:538px;width:0.8px;height:9px;background:#4e4e4e"></div><div class="a" style="left:554.57px;top:538px;width:0.8px;height:9px;background:#4e4e4e"></div><div class="a" style="left:567.36px;top:538px;width:0.8px;height:9px;background:#4e4e4e"></div><div class="a" style="left:580.14px;top:538px;width:0.8px;height:9px;background:#4e4e4e"></div><div class="a" style="left:592.93px;top:538px;width:0.8px;height:9px;background:#4e4e4e"></div><div class="a" style="left:605.72px;top:538px;width:0.8px;height:9px;background:#4e4e4e"></div><div class="a" style="left:618.51px;top:538px;width:0.8px;height:9px;background:#4e4e4e"></div><div class="a" style="left:631.30px;top:538px;width:0.8px;height:9px;background:#4e4e4e"></div><div class="a" style="left:644.08px;top:538px;width:0.8px;height:9px;background:#4e4e4e"></div><div class="a" style="left:656.87px;top:538px;width:0.8px;height:9px;background:#4e4e4e"></div><div class="a" style="left:669.66px;top:538px;width:0.8px;height:9px;background:#4e4e4e"></div><div class="a" style="left:682.45px;top:538px;width:0.8px;height:9px;background:#4e4e4e"></div><div class="a" style="left:695.24px;top:538px;width:0.8px;height:9px;background:#4e4e4e"></div><div class="a" style="left:708.02px;top:538px;width:0.8px;height:9px;background:#4e4e4e"></div><div class="a" style="left:720.81px;top:538px;width:0.8px;height:9px;background:#4e4e4e"></div><div class="a" style="left:733.60px;top:538px;width:0.8px;height:9px;background:#4e4e4e"></div><div class="a" style="left:746.39px;top:538px;width:0.8px;height:9px;background:#4e4e4e"></div><div class="a" style="left:759.18px;top:538px;width:0.8px;height:9px;background:#4e4e4e"></div><div class="a" style="left:771.96px;top:538px;width:0.8px;height:9px;background:#4e4e4e"></div><div class="a" style="left:784.75px;top:538px;width:0.8px;height:9px;background:#4e4e4e"></div><div class="a" style="left:797.54px;top:538px;width:0.8px;height:9px;background:#4e4e4e"></div><div class="a" style="left:810.33px;top:538px;width:0.8px;height:9px;background:#4e4e4e"></div>
<div class="a" style="left:1px;top:537.2px;width:93px;height:9.8px;background:#9a781c"></div>
<svg class="a" style="left:13.5px;top:540px" width="7" height="6.5" viewBox="0 0 7 6.5"><path d="M0.6 0.5H6.4V6.2H2.2V4.6H0.6Z" fill="#eadfc4"/><path d="M0.6 4.6H2.2V6.2" fill="none" stroke="#8a6a20" stroke-width="0.5"/></svg>
<span class="t" style="left:22.6px;top:540.1px;font-weight:bold;font-size:5.9px;color:#f2ead8;transform:scaleY(1.12);transform-origin:0 0">Layer 1</span>
<svg class="a" style="left:53.5px;top:538.5px" width="9" height="7.5" viewBox="0 0 9 7.5"><path d="M0.8 6.8L1.2 4.6L5.8 0.6L7.8 2.4L3.2 6.4Z" fill="#f2ead8" stroke="#5a4418" stroke-width="0.5"/><path d="M1.2 4.6L3.2 6.4" stroke="#5a4418" stroke-width="0.5"/></svg>
<div class="a" style="left:67.3px;top:541.5px;width:1.8px;height:1.8px;background:#f4f0e0;transform:rotate(45deg)"></div>
<div class="a" style="left:77.5px;top:541.5px;width:1.8px;height:1.8px;background:#f4f0e0;transform:rotate(45deg)"></div>
<div class="a" style="left:86.5px;top:539.4px;width:2.7px;height:5.4px;background:#4a86f4"></div>
<div class="a" style="left:94px;top:537.8px;width:12.8px;height:9.2px;background:#6c6c6c"></div>
<div class="a" style="left:99.3px;top:542.3px;width:2.5px;height:2.5px;background:#000;border-radius:50%"></div>
<div class="a" style="left:94px;top:546.6px;width:726px;height:0.6px;background:#4a4a4a"></div>
<!-- timeline body -->
<div class="a" style="left:1px;top:547px;width:819px;height:51px;background:#383838"></div>
<div class="a" style="left:93.4px;top:547px;width:1.8px;height:51px;background:#3f3f3f"></div>
<!-- timeline v scroll -->
<div class="a" style="left:820.4px;top:537.4px;width:6px;height:60.6px;background:#383838;border-left:1px solid #2c2c2c;box-sizing:border-box"></div>
<svg class="a" style="left:821px;top:539px" width="5" height="3"><path d="M0.5 2.8h4L2.5 0.6z" fill="#888"/></svg>
<svg class="a" style="left:821px;top:594px" width="5" height="3"><path d="M0.5 0.4h4L2.5 2.6z" fill="#888"/></svg>
<!-- playhead -->
<div class="a" style="left:93.9px;top:525.1px;width:13px;height:11.7px;background:rgba(140,30,30,0.45);border:1px solid #b41e1e;box-sizing:border-box"></div>
<span class="t" style="left:94.8px;top:528.1px;font-size:5.9px;color:#e0d8d8;transform:scaleY(1.17);transform-origin:0 0">1</span>
<div class="a" style="left:100px;top:536.8px;width:1px;height:10.5px;background:#c01c1c"></div><div class="a" style="left:99.9px;top:547.2px;width:1.2px;height:51px;background:#861a1a"></div>
<!-- timeline toolbar -->
<div class="a" style="left:1px;top:598px;width:826px;height:8px;background:#454545"></div>
<div class="a" style="left:1px;top:598px;width:826px;height:0.7px;background:#555"></div>
<div class="a" style="left:94.3px;top:598.5px;width:0.7px;height:7.5px;background:#333"></div>
<div class="a" style="left:88px;top:600px;width:3px;height:5px;background:#6a6a6a"></div>
<div class="a" style="left:0;top:606px;width:827px;height:2px;background:#262626"></div>
<!-- timeline toolbar icons -->
<svg class="a" style="left:0;top:598px" width="827" height="8" viewBox="0 598 827 8">
<g fill="#b4b4b4">
<path d="M6.2 600.2h4.8v5H8v-1.6H6.2z" fill="#d0d0d0"/><path d="M6.2 603.8h1.4v1.4z" fill="#888"/>
<path d="M16.4 600.6h2.6l0.8 0.8h3.2v3.8h-6.6z" fill="#c8c8c8"/>
<path d="M28.2 601h5.8v0.9h-5.8zM30 600.3h2.2v0.7H30zM28.8 602.2h4.6l-0.4 3h-3.8z" fill="#bdbdbd"/>
<path d="M98.2 600.2h0.9v4.6h-0.9zM103.8 600.2v4.6l-4.2-2.3z"/>
<path d="M107.9 602.5l3.6-2.3v4.6zM112.6 600.2h1v4.6h-1z"/>
<path d="M118.2 600v5l4.6-2.5z"/>
<path d="M127 600.2h1v4.6h-1zM128.8 600.2v4.6l4.2-2.3z" fill="#8a8a8a"/>
<path d="M137.2 600.2v4.6l4.4-2.3zM142 600.2h0.9v4.6H142z"/>
</g>
<path d="M147.9 599.5v6" stroke="#333" stroke-width="0.7"/>
<path d="M151.8 602.5h6.8M155.2 600.2v4.6" stroke="#8a8a8a" stroke-width="1.2"/>
<path d="M162.6 603V605h6.6v-2.2M163.5 602.2h4.6M166.5 600.6l1.8 1.6l-1.8 1.6" fill="none" stroke="#c8c8c8" stroke-width="1"/>
<path d="M174.2 599.5v6" stroke="#333" stroke-width="0.7"/>
<g fill="none" stroke="#c0c0c0" stroke-width="0.8">
<rect x="179.2" y="600.3" width="3.8" height="2.8" fill="#9a9a9a" stroke="none"/><rect x="181" y="602" width="3.8" height="3" fill="#c8c8c8" stroke="none"/>
<rect x="188.4" y="600.5" width="3.2" height="2.8"/><rect x="190.2" y="602.2" width="3.6" height="2.8" fill="#c8c8c8"/>
<rect x="198" y="600.5" width="2.6" height="4.2" fill="#b0b0b0" stroke="none"/><rect x="200.8" y="601.6" width="2.4" height="3.4"/>
<path d="M207.4 600.5h-0.4v4h1M212.8 600.5h0.4v4h-1M209.2 602.5h2"/>
</g>
<path d="M218.3 599.5v6" stroke="#333" stroke-width="0.7"/>
</g>
</svg>
<span class="t" style="left:223.2px;top:599.8px;font-size:5.2px;color:#d9a32a">1</span>
<div class="a" style="left:223.2px;top:605px;width:3px;height:0.6px;background:#6e5e3c"></div>
<span class="t" style="left:240.8px;top:599.8px;font-size:5.2px;color:#d9a32a">24.00</span>
<div class="a" style="left:240.8px;top:605px;width:12.8px;height:0.6px;background:#6e5e3c"></div>
<span class="t" style="left:253.8px;top:599.8px;font-size:5.2px;color:#b0b8c0">fps</span>
<span class="t" style="left:266.7px;top:599.8px;font-size:5.2px;color:#d9a32a">0.0</span>
<div class="a" style="left:266.7px;top:605px;width:7.9px;height:0.6px;background:#6e5e3c"></div>
<span class="t" style="left:275.5px;top:599.8px;font-size:5.2px;color:#b0b8c0">s</span>
<div class="a" style="left:285px;top:598.6px;width:535px;height:6.6px;background:#383838;border:1px solid #2a2a2a;box-sizing:border-box"></div>
<svg class="a" style="left:286.5px;top:599.8px" width="4" height="5"><path d="M3.2 0.4v3.8L0.8 2.3z" fill="#d0d0d0"/></svg>
<div class="a" style="left:291.3px;top:598.6px;width:53.6px;height:6.6px;background:#454545;border:1px solid #2a2a2a;box-sizing:border-box"></div>
<svg class="a" style="left:815px;top:599.8px" width="4" height="5"><path d="M0.8 0.4v3.8L3.2 2.3z" fill="#d0d0d0"/></svg>
<div class="a" style="left:820.4px;top:598.6px;width:6px;height:6.6px;background:#484848"></div>
<!-- output tab bar -->
<div class="a" style="left:0;top:608px;width:827px;height:9px;background:#2c2c2c"></div>
<div class="a" style="left:1px;top:608px;width:25px;height:9px;background:#444"></div>
<span class="t" style="left:3.8px;top:610.2px;font-size:5.3px;font-weight:bold;color:#c8cdd2">Output</span>
<svg class="a" style="left:817px;top:610px" width="9" height="6"><path d="M0.5 2.2h2.4L1.7 3.6z" fill="#bbb"/><rect x="3.6" y="0.6" width="4.6" height="4.6" fill="#6a6a6a"/></svg>
<div class="a" style="left:0;top:617px;width:827px;height:1px;background:#3a3a3a"></div>
<div class="a" style="left:827px;top:21px;width:2px;height:597px;background:#232323"></div>
<!-- right side -->
<div class="a" style="left:827px;top:21px;width:197px;height:6.8px;background:#2a2a2a"></div>
<svg class="a" style="left:842px;top:22.5px" width="6" height="4"><path d="M2.6 0.4L0.6 2L2.6 3.6M5.2 0.4L3.2 2L5.2 3.6" fill="none" stroke="#b8b8b8" stroke-width="0.8"/></svg>
<svg class="a" style="left:994px;top:22.5px" width="6" height="4"><path d="M0.6 0.4L2.6 2L0.6 3.6M3.2 0.4L5.2 2L3.2 3.6" fill="none" stroke="#b8b8b8" stroke-width="0.8"/></svg>
<svg class="a" style="left:1016px;top:22.5px" width="6" height="4"><path d="M0.6 0.4L2.6 2L0.6 3.6M3.2 0.4L5.2 2L3.2 3.6" fill="none" stroke="#b8b8b8" stroke-width="0.8"/></svg>
<!-- icon column -->
<div class="a" style="left:829px;top:27.8px;width:19.8px;height:590.2px;background:#454545"></div>
<div class="a" style="left:833.3px;top:29.3px;width:10.7px;height:2px;background:#1e1e1e"></div>
<div class="a" style="left:833.3px;top:66px;width:10.7px;height:2px;background:#1e1e1e"></div>
<div class="a" style="left:833.3px;top:117.9px;width:10.7px;height:2px;background:#1e1e1e"></div>
<div class="a" style="left:829px;top:63.8px;width:19.8px;height:1px;background:#383838"></div>
<div class="a" style="left:829px;top:114.7px;width:19.8px;height:1px;background:#383838"></div>
<div class="a" style="left:829px;top:115.7px;width:19.8px;height:0.6px;background:#4e4e4e"></div>
<div class="a" style="left:829px;top:136.8px;width:19.8px;height:1px;background:#383838"></div>
<div class="a" style="left:829px;top:137.8px;width:19.8px;height:0.6px;background:#4e4e4e"></div>
<svg class="a" style="left:829px;top:27.8px" width="20" height="110" viewBox="829 27.8 20 110">
<path d="M839.5 36.4C843.5 36.4 845.3 38.6 845 40.4C844.7 41.6 843 41.4 842.6 42.4C842.3 43.4 841 44.5 838.5 44.5C835.6 44.5 833.8 42.8 833.9 40.6C834 38.2 836.4 36.4 839.5 36.4Z" fill="#d8d8d8"/>
<circle cx="836.5" cy="41.2" r="0.7" fill="#555"/><circle cx="838.8" cy="42.4" r="0.7" fill="#555"/><circle cx="841" cy="41.8" r="0.7" fill="#555"/><circle cx="838.6" cy="39.2" r="0.6" fill="#555"/>
<rect x="834.4" y="52.2" width="9.2" height="5.8" fill="#d0d0d0"/>
<path d="M834.4 55.1H843.6M837.4 52.2V58M840.4 52.2V58" stroke="#3a3a3a" stroke-width="0.6"/>
<rect x="835" y="52.8" width="2" height="1.8" fill="#222"/><rect x="838" y="52.8" width="2" height="1.8" fill="#222"/>
<rect x="835.6" y="73" width="0.9" height="7.3" fill="#9a9a9a"/>
<rect x="836.6" y="73.6" width="4.4" height="2.8" fill="#d8d8d8"/><rect x="836.6" y="77.2" width="7" height="2.8" fill="#d8d8d8"/>
<circle cx="839.3" cy="92.4" r="4.4" fill="#d4d4d4"/>
<rect x="838.6" y="89.4" width="1.5" height="1.2" fill="#2a2a2a"/><rect x="838.6" y="91.2" width="1.5" height="3.8" fill="#2a2a2a"/>
<path d="M835.2 103.3h8M835.2 110.5h8M835.2 103.3v7.2M843.2 103.3v7.2" stroke="#d8d8d8" stroke-width="0.9" stroke-dasharray="1.1 1"/>
<rect x="838" y="106" width="2.4" height="2" fill="#888"/>
<circle cx="836.9" cy="131" r="2.2" fill="#cfcfcf"/><circle cx="840.4" cy="128.3" r="1.6" fill="#cfcfcf"/><circle cx="842.1" cy="125" r="1.2" fill="#d8d8d8"/>
</svg>
<!-- properties panel -->
<div class="a" style="left:850.3px;top:27.8px;width:151.7px;height:9.1px;background:#2e2e2e"></div>
<div class="a" style="left:850.3px;top:27.8px;width:32.7px;height:9.1px;background:#444"></div>
<span class="t" style="left:853.5px;top:29.6px;font-size:5.3px;font-weight:bold;color:#c8cdd2">Properties</span>
<svg class="a" style="left:992px;top:30.5px" width="9" height="5"><path d="M0.5 1.6h2.4L1.7 3z" fill="#bbb"/><rect x="3.6" y="0.2" width="4.6" height="4.6" fill="#6a6a6a"/></svg>
<div class="a" style="left:850.3px;top:36.9px;width:151.7px;height:284.5px;background:#444"></div>
<div class="a" style="left:865.4px;top:49.5px;width:9px;height:8.5px;background:linear-gradient(#9a9a9a,#7c7c7c);border:0.7px solid #a6a6a6;box-sizing:border-box"></div><span class="t" style="left:867.2px;top:51.3px;font-size:5px;font-weight:bold;color:#dedede">Fl</span><span class="t" style="left:888.8px;top:43.2px;font-size:6.05px;color:#c4c4c4;transform:scaleY(1.25);transform-origin:0 0">Document</span><span class="t" style="left:888.8px;top:58.6px;font-size:6.3px;color:#c0c0c0;transform:scaleY(1.08);transform-origin:0 0">export test.fla</span><div class="a" style="left:850.3px;top:70.5px;width:151.7px;height:10.5px;background:#4a4a4a;border-top:1px solid #2c2c2c;border-bottom:1px solid #2c2c2c;box-sizing:border-box"></div><svg class="a" style="left:853.4px;top:74.5px" width="6" height="5"><path d="M0.4 0.8h4.8L2.8 3.6z" fill="#e8e8e8"/></svg><span class="t" style="left:861.3px;top:71.6px;font-size:6.2px;color:#c8c8c8;transform:scaleY(1.2);transform-origin:0 0">Publish</span><span class="t" style="right:138.0px;top:87.5px;font-size:5.8px;color:#c4c4c4;transform:scaleY(1.26);transform-origin:0 0">Profile:</span><span class="t" style="left:889px;top:87.5px;font-size:5.8px;color:#c4c4c4;transform:scaleY(1.26);transform-origin:0 0">Default</span><div class="a" style="left:889.4px;top:95.3px;width:63.6px;height:9.5px;background:linear-gradient(#404040,#363636);border:1px solid #262626;box-sizing:border-box;border-radius:1px"></div><span class="t" style="left:893.4px;top:97.2px;font-size:5.8px;color:#c4c4c4;transform:scaleY(1.26);transform-origin:0 0">Publish Settings...</span><div class="a" style="left:850.3px;top:108.2px;width:151.7px;height:0.8px;background:#333"></div><div class="a" style="left:850.3px;top:109.0px;width:151.7px;height:0.6px;background:#4c4c4c"></div><span class="t" style="right:138.0px;top:113.7px;font-size:5.8px;color:#c4c4c4;transform:scaleY(1.26);transform-origin:0 0">Target:</span><div class="a" style="left:889.4px;top:111.9px;width:89.6px;height:9.7px;background:linear-gradient(#3e3e3e,#363636);border:1px solid #262626;box-sizing:border-box;border-radius:1px"></div><div class="a" style="left:969.5px;top:112.9px;width:0.8px;height:7.7px;background:#2a2a2a"></div><svg class="a" style="left:972.1px;top:115.3px" width="6" height="4"><path d="M0.6 0.6h4.6L2.9 3.2z" fill="#d8d8d8"/></svg><span class="t" style="left:892.9px;top:114.4px;font-size:5.8px;color:#c0c0c0;transform:scaleY(1.26);transform-origin:0 0">Flash Player 11.8</span><span class="t" style="right:138.0px;top:129.0px;font-size:5.8px;color:#c4c4c4;transform:scaleY(1.26);transform-origin:0 0">Script:</span><div class="a" style="left:889.4px;top:127.5px;width:89.6px;height:9.3px;background:linear-gradient(#3e3e3e,#363636);border:1px solid #262626;box-sizing:border-box;border-radius:1px"></div><div class="a" style="left:969.5px;top:128.5px;width:0.8px;height:7.3px;background:#2a2a2a"></div><svg class="a" style="left:972.1px;top:130.8px" width="6" height="4"><path d="M0.6 0.6h4.6L2.9 3.2z" fill="#d8d8d8"/></svg><span class="t" style="left:892.9px;top:130.0px;font-size:5.8px;color:#c0c0c0;transform:scaleY(1.26);transform-origin:0 0">ActionScript 3.0</span><svg class="a" style="left:982px;top:127.0px" width="11" height="10" viewBox="0 0 11 10"><path d="M2.2 2.6A2.3 2.3 0 1 0 5.2 1.4" fill="none" stroke="#d0d0d0" stroke-width="1.5"/><path d="M5.4 4.6L8.8 8.2" stroke="#d0d0d0" stroke-width="1.7" stroke-linecap="round"/></svg><div class="a" style="left:850.3px;top:139.6px;width:151.7px;height:0.8px;background:#333"></div><div class="a" style="left:850.3px;top:140.4px;width:151.7px;height:0.6px;background:#4c4c4c"></div><span class="t" style="right:138.0px;top:147.6px;font-size:5.8px;color:#c4c4c4;transform:scaleY(1.26);transform-origin:0 0">Class:</span><div class="a" style="left:889.4px;top:146.3px;width:89.6px;height:9.3px;background:#a5a5a5;border:1px solid #262626;box-sizing:border-box"></div><svg class="a" style="left:984.3px;top:147px" width="8" height="8" viewBox="0 0 8 8"><path d="M0.6 7.4L1 5.8L4.8 2L6 3.2L2.2 7Z" fill="#d4d4d4"/><path d="M5 1.2C5.8 0.2 7 0.4 7.4 1C7.8 1.8 7.2 2.6 6.6 3.2L4.6 1.6Z" fill="#e0e0e0"/></svg><div class="a" style="left:850.3px;top:162.0px;width:151.7px;height:10.0px;background:#4a4a4a;border-top:1px solid #2c2c2c;border-bottom:1px solid #2c2c2c;box-sizing:border-box"></div><svg class="a" style="left:853.4px;top:166.0px" width="6" height="5"><path d="M0.4 0.8h4.8L2.8 3.6z" fill="#e8e8e8"/></svg><span class="t" style="left:861.3px;top:163.1px;font-size:6.2px;color:#c8c8c8;transform:scaleY(1.2);transform-origin:0 0">Properties</span><span class="t" style="right:138.0px;top:178.1px;font-size:5.8px;color:#c4c4c4;transform:scaleY(1.26);transform-origin:0 0">FPS:</span><span class="t" style="left:893.5px;top:178.1px;font-size:5.8px;transform:scaleY(1.26);transform-origin:0 0;color:#d9a32a">24.00</span><div class="a" style="left:893.6px;top:184px;width:14.3px;height:0.6px;background:#6e5e3c"></div><div class="a" style="left:850.3px;top:188.2px;width:151.7px;height:0.8px;background:#333"></div><div class="a" style="left:850.3px;top:189.0px;width:151.7px;height:0.6px;background:#4c4c4c"></div><span class="t" style="right:138.0px;top:193.2px;font-size:5.8px;color:#c4c4c4;transform:scaleY(1.26);transform-origin:0 0">Size:</span><span class="t" style="left:893.5px;top:193.2px;font-size:5.8px;transform:scaleY(1.26);transform-origin:0 0;color:#d9a32a">1024</span><div class="a" style="left:893.6px;top:199.3px;width:12.8px;height:0.6px;background:#6e5e3c"></div><span class="t" style="left:919px;top:193.2px;font-size:5.8px;color:#c4c4c4;transform:scaleY(1.26);transform-origin:0 0">x</span><span class="t" style="left:931.8px;top:193.2px;font-size:5.8px;transform:scaleY(1.26);transform-origin:0 0;color:#d9a32a">768</span><div class="a" style="left:932px;top:199.3px;width:9.7px;height:0.6px;background:#6e5e3c"></div><span class="t" style="left:960.3px;top:193.2px;font-size:5.8px;color:#c4c4c4;transform:scaleY(1.26);transform-origin:0 0">px</span><svg class="a" style="left:982px;top:191.6px" width="11" height="10" viewBox="0 0 11 10"><path d="M2.2 2.6A2.3 2.3 0 1 0 5.2 1.4" fill="none" stroke="#d0d0d0" stroke-width="1.5"/><path d="M5.4 4.6L8.8 8.2" stroke="#d0d0d0" stroke-width="1.7" stroke-linecap="round"/></svg><div class="a" style="left:850.3px;top:202.0px;width:151.7px;height:0.8px;background:#333"></div><div class="a" style="left:850.3px;top:202.8px;width:151.7px;height:0.6px;background:#4c4c4c"></div><span class="t" style="right:138.0px;top:208.2px;font-size:5.8px;color:#c4c4c4;transform:scaleY(1.26);transform-origin:0 0">Stage:</span><div class="a" style="left:892.9px;top:206.8px;width:15px;height:7.1px;background:#fff;border:0.6px solid #222;box-sizing:border-box"></div><div class="a" style="left:850.3px;top:222px;width:151.7px;height:1px;background:#2c2c2c"></div><div class="a" style="left:850.3px;top:223.0px;width:151.7px;height:9.5px;background:#4a4a4a;border-top:1px solid #2c2c2c;border-bottom:1px solid #2c2c2c;box-sizing:border-box"></div><svg class="a" style="left:853.8px;top:225.2px" width="5" height="6"><path d="M0.6 0.4v5L3.4 2.9z" fill="#e8e8e8"/></svg><span class="t" style="left:861.3px;top:224.1px;font-size:6.2px;color:#c8c8c8;transform:scaleY(1.2);transform-origin:0 0">SWF History</span><div class="a" style="left:850.3px;top:232.5px;width:151.7px;height:2.5px;background:#3a3a3a"></div><div class="a" style="left:850.3px;top:235.0px;width:151.7px;height:9.6px;background:#4a4a4a;border-top:1px solid #2c2c2c;border-bottom:1px solid #2c2c2c;box-sizing:border-box"></div><svg class="a" style="left:853.8px;top:237.2px" width="5" height="6"><path d="M0.6 0.4v5L3.4 2.9z" fill="#e8e8e8"/></svg><span class="t" style="left:861.3px;top:236.1px;font-size:6.2px;color:#c8c8c8;transform:scaleY(1.2);transform-origin:0 0">Accessibility</span>

<div class="a" style="left:850.3px;top:321.2px;width:151.7px;height:2px;background:#262626"></div><div class="a" style="left:850.3px;top:323px;width:151.7px;height:9px;background:#2e2e2e"></div><div class="a" style="left:850.3px;top:323px;width:24.6px;height:9px;background:#444"></div><span class="t" style="left:853.5px;top:324.8px;font-size:5.3px;font-weight:bold;color:#c8cdd2">Library</span><svg class="a" style="left:992px;top:325.5px" width="9" height="5"><path d="M0.5 1.6h2.4L1.7 3z" fill="#bbb"/><rect x="3.6" y="0.2" width="4.6" height="4.6" fill="#6a6a6a"/></svg><div class="a" style="left:850.3px;top:332px;width:151.7px;height:278px;background:#444"></div><div class="a" style="left:852.6px;top:335.7px;width:117.8px;height:8.8px;background:linear-gradient(#3e3e3e,#363636);border:1px solid #262626;box-sizing:border-box;border-radius:1px"></div><div class="a" style="left:961px;top:336.7px;width:0.8px;height:6.8px;background:#2a2a2a"></div><svg class="a" style="left:963.6px;top:338.8px" width="6" height="4"><path d="M0.6 0.6h4.6L2.9 3.2z" fill="#d8d8d8"/></svg><span class="t" style="left:856px;top:337.8px;font-size:5.8px;color:#c0c0c0;transform:scaleY(1.26);transform-origin:0 0">export test.fla</span><svg class="a" style="left:975px;top:337px" width="24" height="8" viewBox="975 337 24 8"><path d="M975.8 341h3M978.8 339v4h1.2v-1.5h3.6v-1h-3.6v-1.5z" fill="#c8c8c8" stroke="#c8c8c8" stroke-width="0.5"/><rect x="989.5" y="337.6" width="5.2" height="5" fill="#9a9a9a"/><rect x="991.8" y="339.8" width="5.6" height="5" fill="#c8c8c8" stroke="#444" stroke-width="0.5"/></svg><div class="a" style="left:850.3px;top:346px;width:151.7px;height:0.8px;background:#3a3a3a"></div><div class="a" style="left:850.3px;top:419.6px;width:151.7px;height:0.8px;background:#383838"></div><div class="a" style="left:850.3px;top:420.4px;width:151.7px;height:0.8px;background:#505050"></div><span class="t" style="left:851.6px;top:425.2px;font-size:5.6px;color:#c4c4c4;transform:scaleY(1.1);transform-origin:0 0">7 items</span><div class="a" style="left:938.8px;top:423px;width:60.4px;height:9.6px;background:#a6a6a6;border:1px solid #2a2a2a;box-sizing:border-box"></div><svg class="a" style="left:939.5px;top:423.8px" width="8" height="8" viewBox="0 0 8 8"><circle cx="4.6" cy="3.4" r="2.2" fill="none" stroke="#3a3a3a" stroke-width="0.8"/><path d="M3 5L1 7" stroke="#3a3a3a" stroke-width="1"/></svg><div class="a" style="left:851px;top:433.6px;width:150.5px;height:10.5px;background:#474747;border-top:0.8px solid #2e2e2e;border-bottom:0.8px solid #2e2e2e;box-sizing:border-box"></div><span class="t" style="left:852.6px;top:435.8px;font-size:5.8px;color:#c0c0c0;transform:scaleY(1.26);transform-origin:0 0">Name</span><svg class="a" style="left:965px;top:436.5px" width="7" height="4"><path d="M0.4 3.4h6.2L3.5 0.4z" fill="#e0e0e0"/></svg><div class="a" style="left:973.5px;top:434.5px;width:0.8px;height:9px;background:#333"></div><span class="t" style="left:975.6px;top:435.8px;font-size:5.8px;color:#c0c0c0;transform:scaleY(1.26);transform-origin:0 0">Linkage</span><div class="a" style="left:850.3px;top:444.2px;width:1.5px;height:166px;background:#3a3a3a"></div><svg class="a" style="left:861.5px;top:445.6px" width="9" height="8" viewBox="0 0 9 8"><path d="M0.5 0.5h8v7h-8z" fill="none" stroke="#d0d0d0" stroke-width="0.7"/><path d="M1 6.8L3.2 4.2L4.6 5.4L6.2 3.6L8 5.8V7H1z" fill="#cfcfcf"/><circle cx="2.8" cy="2.4" r="0.8" fill="#cfcfcf"/></svg><span class="t" style="left:872.5px;top:446.5px;font-size:5.8px;color:#c4c4c4;transform:scaleY(1.26);transform-origin:0 0">atari130xe.png</span><svg class="a" style="left:861.5px;top:455.6px" width="9" height="8" viewBox="0 0 9 8"><path d="M0.5 0.5h8v7h-8z" fill="none" stroke="#d0d0d0" stroke-width="0.7"/><path d="M1 6.8L3.2 4.2L4.6 5.4L6.2 3.6L8 5.8V7H1z" fill="#cfcfcf"/><circle cx="2.8" cy="2.4" r="0.8" fill="#cfcfcf"/></svg><span class="t" style="left:872.5px;top:456.5px;font-size:5.8px;color:#c4c4c4;transform:scaleY(1.26);transform-origin:0 0">budbrain_chick.png</span><svg class="a" style="left:861.5px;top:465.7px" width="9" height="8" viewBox="0 0 9 8"><path d="M0.5 0.5h8v7h-8z" fill="none" stroke="#d0d0d0" stroke-width="0.7"/><path d="M1 6.8L3.2 4.2L4.6 5.4L6.2 3.6L8 5.8V7H1z" fill="#cfcfcf"/><circle cx="2.8" cy="2.4" r="0.8" fill="#cfcfcf"/></svg><span class="t" style="left:872.5px;top:466.6px;font-size:5.8px;color:#c4c4c4;transform:scaleY(1.26);transform-origin:0 0">bunny.png</span><svg class="a" style="left:861.5px;top:475.7px" width="9" height="8" viewBox="0 0 9 8"><path d="M0.5 0.5h8v7h-8z" fill="none" stroke="#d0d0d0" stroke-width="0.7"/><path d="M1 6.8L3.2 4.2L4.6 5.4L6.2 3.6L8 5.8V7H1z" fill="#cfcfcf"/><circle cx="2.8" cy="2.4" r="0.8" fill="#cfcfcf"/></svg><span class="t" style="left:872.5px;top:476.6px;font-size:5.8px;color:#c4c4c4;transform:scaleY(1.26);transform-origin:0 0">car.png</span><svg class="a" style="left:861.5px;top:485.8px" width="9" height="8" viewBox="0 0 9 8"><path d="M0.5 0.5h8v7h-8z" fill="none" stroke="#d0d0d0" stroke-width="0.7"/><path d="M1 6.8L3.2 4.2L4.6 5.4L6.2 3.6L8 5.8V7H1z" fill="#cfcfcf"/><circle cx="2.8" cy="2.4" r="0.8" fill="#cfcfcf"/></svg><span class="t" style="left:872.5px;top:486.7px;font-size:5.8px;color:#c4c4c4;transform:scaleY(1.26);transform-origin:0 0">exocet_spaceman.png</span><svg class="a" style="left:861.5px;top:495.8px" width="9" height="8" viewBox="0 0 9 8"><path d="M0.5 0.5h8v7h-8z" fill="none" stroke="#d0d0d0" stroke-width="0.7"/><path d="M1 6.8L3.2 4.2L4.6 5.4L6.2 3.6L8 5.8V7H1z" fill="#cfcfcf"/><circle cx="2.8" cy="2.4" r="0.8" fill="#cfcfcf"/></svg><span class="t" style="left:872.5px;top:496.7px;font-size:5.8px;color:#c4c4c4;transform:scaleY(1.26);transform-origin:0 0">hotdog.png</span><svg class="a" style="left:861.5px;top:505.9px" width="9" height="8" viewBox="0 0 9 8"><path d="M0.5 0.5h8v7h-8z" fill="#4a4a4a" stroke="#ddd" stroke-width="0.7"/><path d="M1 7L4 3.5L5.5 5L8 1.5" stroke="#e8e8e8" stroke-width="1.2" fill="none"/><circle cx="2.6" cy="2.4" r="1" fill="#e8e8e8"/></svg><span class="t" style="left:872.5px;top:506.8px;font-size:5.8px;color:#c4c4c4;transform:scaleY(1.26);transform-origin:0 0">Symbol1</span><div class="a" style="left:850.3px;top:609.8px;width:151.7px;height:8.2px;background:#454545"></div><svg class="a" style="left:850.3px;top:610px" width="37" height="8" viewBox="850.5 610 37 8"><path d="M852 611h5v5.6h-3.4v-1.8H852z" fill="#c8c8c8"/><path d="M860.2 612h2.2l0.8 0.8h3v3.6h-6z" fill="#c8c8c8"/><circle cx="872.3" cy="614" r="3" fill="#c8c8c8"/><rect x="871.8" y="612.2" width="1.1" height="0.9" fill="#333"/><rect x="871.8" y="613.6" width="1.1" height="2.4" fill="#333"/><path d="M879.3 612.2h5.6M880 613v3.6h4.2V613" stroke="#bdbdbd" stroke-width="0.9" fill="none"/></svg><div class="a" style="left:887.3px;top:610.5px;width:113.6px;height:7px;background:#383838;border:1px solid #2a2a2a;box-sizing:border-box"></div><div class="a" style="left:895.7px;top:610.5px;width:53.6px;height:7px;background:#474747;border:1px solid #2a2a2a;box-sizing:border-box"></div><svg class="a" style="left:889px;top:612px" width="4" height="5"><path d="M3.2 0.4v3.8L0.8 2.3z" fill="#d0d0d0"/></svg><svg class="a" style="left:996.5px;top:612px" width="4" height="5"><path d="M0.8 0.4v3.8L3.2 2.3z" fill="#d0d0d0"/></svg><div class="a" style="left:848.8px;top:27.8px;width:1.5px;height:590.2px;background:#262626"></div><div class="a" style="left:1002px;top:27.8px;width:2.4px;height:590.2px;background:#2a2a2a"></div><div class="a" style="left:1004.4px;top:27.8px;width:18.9px;height:9.1px;background:#2e2e2e"></div><svg class="a" style="left:1013.5px;top:30.5px" width="9" height="5"><path d="M0.5 1.6h2.4L1.7 3z" fill="#bbb"/><rect x="3.6" y="0.2" width="4.6" height="4.6" fill="#6a6a6a"/></svg><div class="a" style="left:1004.4px;top:36.9px;width:18.9px;height:581.1px;background:#454545"></div><div class="a" style="left:1023.3px;top:27.8px;width:0.7px;height:590.2px;background:#2e2e2e"></div>
<svg class="a" style="left:1004px;top:37px" width="20" height="440" viewBox="1004 37 20 440">
<g fill="none" stroke="#cfcfcf" stroke-width="0.9" stroke-linejoin="round">
<path d="M1010.6 42.3V49L1012.4 47.4L1013.8 50L1015 49.4L1013.8 46.8H1016Z"/>
</g>
<path d="M1010.8 56.8V64.4L1012.6 62.6L1014 65.2L1015.3 64.6L1014 62H1016.4Z" fill="#cfcfcf"/>
<rect x="1005.3" y="69.2" width="15.6" height="12.4" fill="#2a2a2a" stroke="#1c1c1c" stroke-width="0.6"/>
<path d="M1008.2 71.5V79L1010.2 77L1011.8 79.8L1013 79.2L1011.6 76.4H1014.2Z" fill="#bdbdbd"/>
<path d="M1011.5 72.4h7M1011.5 79.6h7M1018.4 72.4v7.2" stroke="#b8b8b8" stroke-width="0.8" stroke-dasharray="1 0.9"/>
<path d="M1019.8 80.4l1.2-1.2v1.2z" fill="#aaa"/>
<path d="M1013.4 85.8L1018 90.6L1013.4 95L1008.8 90.6Z" fill="#a8a8a8"/><path d="M1013.4 85.8L1018 90.6L1013.4 92.2L1008.8 90.6Z" fill="#d0d0d0"/><path d="M1013.4 92.2V95" stroke="#777" stroke-width="0.5"/>
<path d="M1019.6 95.6l1.2-1.2v1.2z" fill="#aaa"/>
<ellipse cx="1013.4" cy="104.4" rx="4.5" ry="2.5" fill="none" stroke="#c8c8c8" stroke-width="0.9"/><path d="M1010.2 106.2C1009.4 107.4 1010.2 108.6 1011 109" fill="none" stroke="#c8c8c8" stroke-width="0.8"/>
<path d="M1019.6 111.2l1.2-1.2v1.2z" fill="#aaa"/>
<path d="M1004.4 113.4h19" stroke="#383838" stroke-width="0.8"/>
<path d="M1009.6 126.4L1010.6 121.8L1014.6 118.8L1017.4 121.2L1014.6 125L1010.2 126.6Z" fill="#c8c8c8"/><path d="M1014.6 118.8L1015.8 117.8L1018.2 120.2L1017.4 121.2" fill="#bbb"/><path d="M1010.2 126.2L1013 123" stroke="#555" stroke-width="0.5"/>
<path d="M1019.6 127l1.2-1.2v1.2z" fill="#aaa"/>
<path d="M1010 134.6H1017M1013.5 134.6V141" stroke="#d0d0d0" stroke-width="1.1"/><path d="M1010 134.4v1.2M1017 134.4v1.2" stroke="#d0d0d0" stroke-width="0.8"/>
<path d="M1009.3 155.8L1017 148.2" stroke="#cfcfcf" stroke-width="0.9"/>
<rect x="1009.3" y="164.2" width="7.6" height="6.8" fill="#8c8c8c" stroke="#c8c8c8" stroke-width="0.6"/>
<path d="M1019.4 173l1.2-1.2v1.2z" fill="#aaa"/>
<ellipse cx="1013.4" cy="181.8" rx="4.5" ry="3.3" fill="#8c8c8c" stroke="#c8c8c8" stroke-width="0.6"/>
<path d="M1019.4 186.6l1.2-1.2v1.2z" fill="#aaa"/>
<circle cx="1013.2" cy="196.5" r="3.9" fill="#8a8a8a" stroke="#b0b0b0" stroke-width="0.6"/>
<path d="M1009.6 216.2L1010.2 213.8L1015.2 208.8L1016.8 210.4L1011.8 215.4Z" fill="#d0d0d0"/><path d="M1015.2 208.8L1015.9 208.2L1017.5 209.8L1016.8 210.4Z" fill="#eee"/>
<path d="M1012.4 226.2L1017.6 221.8" stroke="#d0d0d0" stroke-width="1"/><path d="M1009 230.6C1009.6 228.4 1010.6 227 1012.4 226.4L1013.2 227.2C1012.6 229.6 1011 230.6 1009 230.6Z" fill="#d8d8d8"/>
<path d="M1004.4 235.2h19" stroke="#383838" stroke-width="0.8"/>
<path d="M1010 241.6L1013.4 239.6L1016.6 243.2L1013 246.4L1009.4 244.4Z" fill="#cfcfcf"/><path d="M1016.4 243.6C1017.6 245 1017.6 246.6 1016.8 247.6" stroke="#cfcfcf" stroke-width="0.8" fill="none"/><path d="M1011.4 240.6V238.8" stroke="#cfcfcf" stroke-width="0.7"/>
<path d="M1008 260.2L1010.6 257.4L1013 259.8L1010.6 262Z" fill="#c8c8c8"/><path d="M1009.6 256.4L1010.6 254.6" stroke="#c8c8c8" stroke-width="0.8"/><path d="M1013.4 259.4h4.4v3.8h-4" fill="none" stroke="#d0d0d0" stroke-width="0.9"/>
<path d="M1009.6 277.6L1014.6 272.4" stroke="#cfcfcf" stroke-width="1.6"/><path d="M1013.4 271L1016.4 268.4C1017.2 267.8 1018.6 269.2 1018 270L1015.4 273Z" fill="#dcdcdc"/>
<path d="M1009.4 290.4L1013 285.2L1018 284.4L1017.6 287.6L1014 292H1009.6Z" fill="#bdbdbd"/><path d="M1009.6 291.8L1013.4 287.8L1017.6 287.2" fill="none" stroke="#eee" stroke-width="0.6"/>
<path d="M1004.4 296h19" stroke="#383838" stroke-width="0.8"/>
<path d="M1009.8 305.2L1008.6 303.4C1009 302.6 1009.8 303 1010.4 303.8V301.6C1010.4 300.8 1011.4 300.8 1011.4 301.6V301C1011.4 300.2 1012.6 300.2 1012.6 301V300.9C1012.6 300.2 1013.8 300.2 1013.8 301V301.5C1013.8 300.9 1015 300.9 1015 301.6V305.8C1015 308 1014 309.5 1012.2 309.5C1011 309.5 1010.4 308.4 1009.8 305.2Z" fill="#cfcfcf"/><path d="M1015 304.5C1015.6 303.6 1016.6 303.4 1017 304C1016.4 305.4 1015.8 306.6 1015 307.4" fill="#cfcfcf"/>
<circle cx="1012.4" cy="319.6" r="2.8" fill="#888" stroke="#c8c8c8" stroke-width="0.9"/><path d="M1014.4 321.8L1017.6 324.8" stroke="#d0d0d0" stroke-width="1.5"/>
<path d="M1004.4 330.6h19" stroke="#383838" stroke-width="0.8"/>
<path d="M1010 341L1010.6 338.6L1015.2 334.6L1016.8 336.2L1012.4 340.4Z" fill="#cfcfcf"/>
<rect x="1007.9" y="343.6" width="10.2" height="8.3" fill="#fff" stroke="#222" stroke-width="0.7"/><path d="M1008.4 351.4L1017.6 344.1" stroke="#e02020" stroke-width="0.7"/>
<path d="M1010.4 359.6L1012.8 357.4L1015.4 360.2L1012.8 362.8L1010 361.4Z" fill="#bdbdbd"/><path d="M1015.2 360.4C1016.2 361.6 1016.2 362.8 1015.6 363.6" stroke="#bdbdbd" stroke-width="0.8" fill="none"/>
<rect x="1007.9" y="366.3" width="10.2" height="8.3" fill="#66ff00" stroke="#222" stroke-width="0.7"/>
<rect x="1006.8" y="379.6" width="3.6" height="3.4" fill="#1e1e1e" stroke="#ddd" stroke-width="0.6"/><rect x="1008.4" y="381.6" width="3.4" height="3.4" fill="#e8e8e8"/>
<path d="M1014.8 379.6h2.6v2.2M1016.2 380.6l1.2 1.4l1.2-1.4M1014.8 385.2h-0.0" stroke="#ddd" stroke-width="0.7" fill="none"/><rect x="1013.8" y="379.4" width="2.4" height="2.2" fill="#e0e0e0"/><rect x="1013.8" y="382.8" width="2.4" height="2.4" fill="#e0e0e0"/><path d="M1017.6 383.6h2.6l-1.2 -1.2M1020.2 383.6l-1.2 1.2" stroke="#ddd" stroke-width="0.7" fill="none"/>
<path d="M1004.4 389.5h19" stroke="#383838" stroke-width="0.8"/>
<path d="M1010.4 403V399.6C1010.4 395.6 1016.4 395.6 1016.4 399.6V403" fill="none" stroke="#cfcfcf" stroke-width="1.6"/><path d="M1009.6 403h2.2M1015.2 403h2.2" stroke="#888" stroke-width="1"/>
<g fill="none" stroke="#6c6c6c" stroke-width="0.8">
<path d="M1009.4 417.4L1011.2 411.8H1018L1016.2 417.4Z"/><path d="M1013 414.2L1014.8 409.6M1013.4 409.8h3"/>
<path d="M1008.2 432.6L1009.4 428.4H1015.4L1014.2 432.6Z"/><path d="M1011.2 428.4L1012.4 425.4H1018L1016.8 429.4"/>
<path d="M1009.4 447V442.4L1017.6 440.4V446.4Z"/><path d="M1012 441.8V446.8M1014.8 441.2V446.6"/>
<ellipse cx="1013" cy="458.9" rx="3.6" ry="2.2"/><path d="M1008 455.4h10M1008 462.6h10"/>
</g>
</svg>

</body></html>
